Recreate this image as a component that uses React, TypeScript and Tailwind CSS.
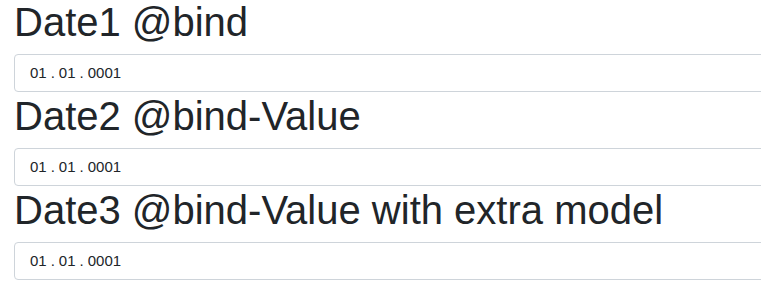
import React from "react";

function DateField() {
  return (
    <div className="h-[38px] w-[calc(100%+40px)] rounded-[4px] border border-[#ced4da] bg-white pl-[15px] flex items-center text-[15px] text-[#212529]">
      <span>01</span>
      <span className="mx-[4px]">.</span>
      <span>01</span>
      <span className="mx-[4px]">.</span>
      <span>0001</span>
    </div>
  );
}

export default function App() {
  const titles = ["Date1 @bind", "Date2 @bind-Value", "Date3 @bind-Value with extra model"];
  return (
    <div
      className="w-[761px] h-[297px] overflow-hidden bg-white text-[#212529]"
      style={{ fontFamily: '"Liberation Sans", Arial, sans-serif' }}
    >
      <div className="mt-[-2px] pl-[14px]">
        {titles.map((t) => (
          <div key={t}>
            <h1 className="text-[40px] leading-[48px] font-normal mb-[8px]">{t}</h1>
            <DateField />
          </div>
        ))}
      </div>
    </div>
  );
}
